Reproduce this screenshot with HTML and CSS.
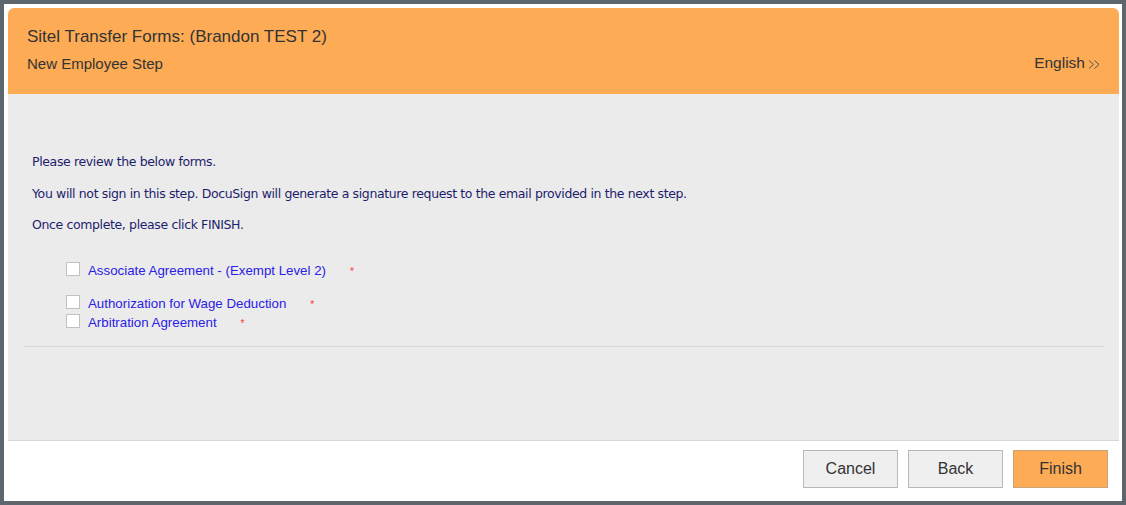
FILE: index.html
```html
<!DOCTYPE html>
<html>
<head>
<meta charset="utf-8">
<link rel="stylesheet" href="styles.css">
</head>
<body>
<div class="frame">
  <header class="header">
    <div class="titles">
      <div class="title">Sitel Transfer Forms: (Brandon TEST 2)</div>
      <div class="subtitle">New Employee Step</div>
    </div>
    <div class="lang">English <svg class="chev" width="13" height="11" viewBox="0 0 13 11"><path d="M1 1.5 L5.5 5.5 L1 9.5 M6.5 1.5 L11 5.5 L6.5 9.5" fill="none" stroke="#555" stroke-width="1"/></svg></div>
  </header>
  <main class="content">
    <p class="msg first">Please review the below forms.</p>
    <p class="msg">You will not sign in this step. DocuSign will generate a signature request to the email provided in the next step.</p>
    <p class="msg">Once complete, please click FINISH.</p>
    <ul class="forms">
      <li class="form gap"><span class="box"></span><a class="link">Associate Agreement - (Exempt Level 2)</a><span class="req">*</span></li>
      <li class="form"><span class="box"></span><a class="link">Authorization for Wage Deduction</a><span class="req">*</span></li>
      <li class="form"><span class="box"></span><a class="link">Arbitration Agreement</a><span class="req">*</span></li>
    </ul>
    <hr class="sep">
  </main>
  <footer class="footer">
    <button class="btn">Cancel</button>
    <button class="btn">Back</button>
    <button class="btn primary">Finish</button>
  </footer>
</div>
</body>
</html>
```
FILE: styles.css
```css
html, body {
  margin: 0;
  padding: 0;
  background: #5d666d;
}
body {
  width: 1126px;
  height: 505px;
  overflow: hidden;
}
.frame {
  margin: 4px 4px 0 4px;
  width: 1118px;
  height: 497px;
  box-sizing: border-box;
  padding: 4px 3px 0 4px;
  background: #ffffff;
  display: flex;
  flex-direction: column;
  font-family: "Liberation Sans", Arial, sans-serif;
}
.header {
  height: 86px;
  background: #fdab55;
  border-radius: 6px 6px 0 0;
  display: flex;
  justify-content: space-between;
  align-items: flex-start;
  padding: 0 18px 0 19px;
  color: #333333;
}
.title {
  font-size: 17px;
  margin-top: 19px;
  line-height: 20px;
}
.subtitle {
  font-size: 15px;
  margin-top: 8px;
  line-height: 18px;
}
.lang {
  font-size: 15.5px;
  margin-top: 46px;
  line-height: 18px;
  display: flex;
  align-items: center;
  gap: 3px;
}
.chev {
  margin-top: 2px;
}
.content {
  height: 347px;
  background: #ebebeb;
  border-bottom: 1px solid #d6d6d6;
  box-sizing: border-box;
  padding: 60px 15px 0 15px;
}
.msg {
  margin: 0 0 0 9px;
  font-family: "DejaVu Sans", Verdana, sans-serif;
  font-size: 12.5px;
  line-height: 15px;
  color: #1d1d6b;
  letter-spacing: -0.37px;
}
.msg + .msg {
  margin-top: 16.5px;
}
.forms {
  list-style: none;
  margin: 29px 0 0 0;
  padding: 0 0 0 43px;
}
.form {
  display: flex;
  align-items: center;
  height: 19px;
}
.form.gap {
  margin-bottom: 14px;
}
.box {
  width: 12px;
  height: 12px;
  border: 1px solid #c4c0bb;
  background: #ffffff;
  margin-right: 8px;
  margin-top: -3px;
}
.link {
  font-size: 13.3px;
  color: #2a20e6;
}
.req {
  color: #ff3333;
  font-size: 10px;
  margin-left: 24px;
  margin-top: 2px;
}
.sep {
  margin: 14px 0 0 0;
  border: 0;
  border-top: 1px solid #dfd7d7;
}
.footer {
  flex: 1;
  display: flex;
  justify-content: flex-end;
  align-items: flex-start;
  gap: 10px;
  padding: 9px 11px 0 0;
}
.btn {
  width: 95px;
  height: 38px;
  background: #efefef;
  border: 1px solid #b8b8b8;
  font-family: "Liberation Sans", Arial, sans-serif;
  font-size: 16px;
  color: #333333;
  padding: 0;
}
.btn.primary {
  background: #fdab55;
  border-color: #c9a27a;
}
```
